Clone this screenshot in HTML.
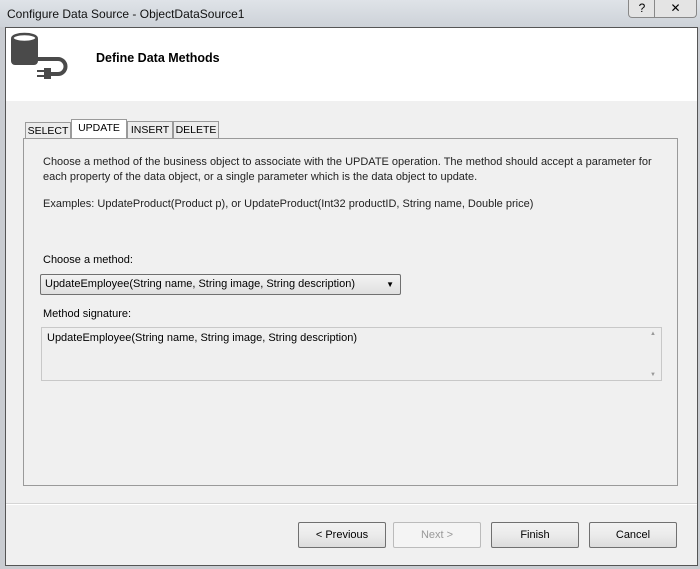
<!DOCTYPE html>
<html><head><style>
body{margin:0;width:700px;height:569px;overflow:hidden;background:#c9ccd1;font-family:"Liberation Sans",sans-serif;font-size:11px;color:#000;position:relative}
.abs{position:absolute}
.title{left:7px;top:7px;font-size:12px;color:#111}
.client{left:5px;top:27px;width:691px;height:537px;background:#f0f0f0;border:1px solid #555}
.hdr{left:0;top:0;width:691px;height:73px;background:#fff}
.btn{height:24px;border:1px solid #707070;border-radius:2px;background:linear-gradient(#f2f2f2,#ebebeb 50%,#dcdcdc);text-align:center;line-height:24px;font-size:11px}
.tab{top:93px;height:17px;border:1px solid #9a9a9a;border-bottom:none;background:#ececec;line-height:17px;font-size:10.5px;text-align:center;box-sizing:border-box}
</style></head><body>
<div class="abs" style="left:0;top:0;width:700px;height:27px;background:linear-gradient(#dfe3e8,#cdd2d8)"></div>
<div class="abs title">Configure Data Source - ObjectDataSource1</div>
<div class="abs" style="left:628px;top:0;width:26px;height:17px;border:1px solid #888;border-top:none;border-radius:0 0 0 4px;background:#e4e4e4;text-align:center;font-size:12px;line-height:16px">?</div>
<div class="abs" style="left:654px;top:0;width:41px;height:17px;border:1px solid #888;border-top:none;border-radius:0 0 4px 0;background:#e4e4e4;text-align:center;font-size:12px;line-height:16px">✕</div>
<div class="abs client">
 <div class="abs hdr"></div>
 <svg class="abs" style="left:2px;top:4px" width="60" height="52" viewBox="0 0 60 52">
  <rect x="3" y="3" width="27" height="30" rx="4" fill="#4a4a4a"/>
  <ellipse cx="16.5" cy="6" rx="12" ry="4" fill="#fff" stroke="#4a4a4a" stroke-width="2.5"/>
  <path d="M30 27 H50 a7.5 7.5 0 0 1 0 15 H42" fill="none" stroke="#4a4a4a" stroke-width="4"/>
  <rect x="36" y="36" width="7" height="11" fill="#4a4a4a"/>
  <rect x="29" y="38" width="7" height="2" fill="#4a4a4a"/><rect x="29" y="43" width="7" height="2" fill="#4a4a4a"/>
 </svg>
 <div class="abs" style="left:90px;top:23px;font-weight:bold;font-size:12.5px">Define Data Methods</div>
 <div class="abs tab" style="left:19px;top:94px;height:16px;width:46px">SELECT</div>
 <div class="abs tab" style="left:65px;top:91px;height:19px;width:56px;background:#fff;z-index:2">UPDATE</div>
 <div class="abs tab" style="left:121px;width:46px">INSERT</div>
 <div class="abs tab" style="left:167px;width:46px">DELETE</div>
 <div class="abs" style="left:17px;top:110px;width:653px;height:346px;border:1px solid #9a9a9a;background:#f0f0f0"></div>
 <div class="abs" style="left:37px;top:127px;width:630px;line-height:15px;color:#222">Choose a method of the business object to associate with the UPDATE operation. The method should accept a parameter for each property of the data object, or a single parameter which is the data object to update.</div>
 <div class="abs" style="left:37px;top:170px;color:#222">Examples: UpdateProduct(Product p), or UpdateProduct(Int32 productID, String name, Double price)</div>
 <div class="abs" style="left:37px;top:226px">Choose a method:</div>
 <div class="abs" style="left:34px;top:246px;width:355px;height:19px;border:1px solid #707070;border-radius:2px;background:linear-gradient(#f3f3f3,#e0e0e0);line-height:19px;padding-left:4px">UpdateEmployee(String name, String image, String description)<span style="position:absolute;right:6px;top:0;font-size:8px">▼</span></div>
 <div class="abs" style="left:37px;top:280px">Method signature:</div>
 <div class="abs" style="left:35px;top:299px;width:614px;height:48px;border:1px solid #c8c8c8;background:#efefef;padding:4px 0 0 5px">UpdateEmployee(String name, String image, String description)<span style="position:absolute;right:5px;top:3px;font-size:6px;color:#999">▲</span><span style="position:absolute;right:5px;bottom:2px;font-size:6px;color:#999">▼</span></div>
 <div class="abs" style="left:0;top:475px;width:691px;height:1px;background:#d5d5d5"></div>
 <div class="abs" style="left:0;top:476px;width:691px;height:1px;background:#fff"></div>
 <div class="abs btn" style="left:292px;top:494px;width:86px">&lt; Previous</div>
 <div class="abs btn" style="left:387px;top:494px;width:86px;border-color:#bbb;background:#f4f4f4;color:#999">Next &gt;</div>
 <div class="abs btn" style="left:485px;top:494px;width:86px">Finish</div>
 <div class="abs btn" style="left:583px;top:494px;width:86px">Cancel</div>
</div>
</body></html>
